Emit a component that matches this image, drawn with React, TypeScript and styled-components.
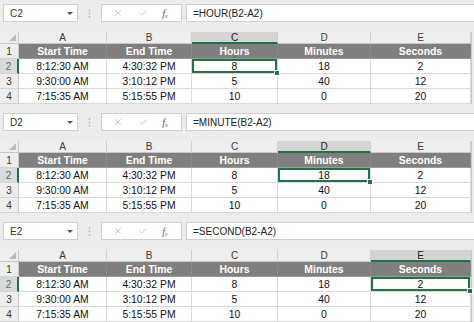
import React from 'react'
import styled, { createGlobalStyle } from 'styled-components'
import { X, Check } from 'lucide-react'

const GlobalStyle = createGlobalStyle`
    body {
        margin: 0;
        background: #ececec;
        font-family: "Liberation Sans", Arial, sans-serif;
    }
`

const Sheet = styled.div`
    width: 474px;
    display: flex;
    flex-direction: column;
`

const Panel = styled.div<{ $first?: boolean }>`
    display: flex;
    flex-direction: column;
    padding-top: ${p => (p.$first ? 4 : 9)}px;
    background: #ececec;
`

const FormulaBar = styled.div`
    display: flex;
    height: 18px;
    padding-left: 3px;
`

const NameBox = styled.div`
    width: 75px;
    box-sizing: border-box;
    background: #fff;
    border: 1px solid #cfcfcf;
    display: flex;
    align-items: center;
    justify-content: space-between;
    padding: 0 4px 0 6px;
    font-size: 10px;
    color: #333;
`

const Arrow = styled.span`
    width: 0;
    height: 0;
    border-left: 3px solid transparent;
    border-right: 3px solid transparent;
    border-top: 3px solid #555;
`

const Grip = styled.div`
    width: 23px;
    display: flex;
    align-items: center;
    justify-content: center;
`

const FuncBox = styled.div`
    width: 81px;
    box-sizing: border-box;
    background: #fff;
    border: 1px solid #cfcfcf;
    display: flex;
    align-items: center;
    justify-content: space-around;
    padding: 0 6px 0 4px;
    color: #b0b0b0;
`

const Fx = styled.span`
    font-family: "Liberation Serif", serif;
    font-style: italic;
    font-size: 10.5px;
    color: #666;
    sub {
        font-size: 6px;
        vertical-align: -1px;
    }
`

const FormulaInput = styled.div`
    flex: 1;
    margin-left: 4px;
    box-sizing: border-box;
    background: #fff;
    border: 1px solid #cfcfcf;
    border-right: none;
    display: flex;
    align-items: center;
    padding-left: 6px;
    font-size: 10px;
    color: #222;
`

const Grid = styled.div`
    margin-top: 10px;
    width: 471px;
    display: grid;
    grid-template-columns: 19px 88px 85px 86px 93px 100px;
    grid-auto-rows: 15px;
    grid-template-rows: 12px;
    border-right: 1px solid #c8c8c8;
    background: #fff;
`

const Corner = styled.div`
    background: #eeeeee;
    border-right: 1px solid #c8c8c8;
    border-bottom: 1px solid #c8c8c8;
    box-sizing: border-box;
    display: flex;
    align-items: flex-end;
    justify-content: flex-end;
    padding: 0 2px 2px 0;
`

const ColHead = styled.div<{ $active?: boolean }>`
    box-sizing: border-box;
    display: flex;
    align-items: center;
    justify-content: center;
    font-size: 10px;
    color: ${p => (p.$active ? '#1f1f1f' : '#3a3a3a')};
    background: ${p => (p.$active ? '#d4d4d4' : '#eeeeee')};
    border-right: 1px solid #d0d0d0;
    border-bottom: ${p => (p.$active ? '2px solid #217346' : '1px solid #c8c8c8')};
`

const RowHead = styled.div<{ $active?: boolean }>`
    box-sizing: border-box;
    display: flex;
    align-items: center;
    justify-content: center;
    font-size: 10px;
    color: ${p => (p.$active ? '#4f7a62' : '#3a3a3a')};
    background: ${p => (p.$active ? '#d9d9d9' : '#eeeeee')};
    border-right: ${p => (p.$active ? '2px solid #217346' : '1px solid #c8c8c8')};
    border-bottom: 1px solid #d4d4d4;
`

const TitleCell = styled.div`
    box-sizing: border-box;
    display: flex;
    align-items: center;
    justify-content: center;
    font-size: 10.4px;
    font-weight: bold;
    color: #fff;
    background: #7f7f7f;
    border-right: 1px solid #8a8a8a;
    border-bottom: 1px solid #9a9a9a;
`

const Cell = styled.div<{ $selected?: boolean }>`
    position: relative;
    box-sizing: border-box;
    display: flex;
    align-items: center;
    justify-content: center;
    font-size: 10.4px;
    color: #111;
    background: #fff;
    border-right: 1px solid #d9d9d9;
    border-bottom: 1px solid #d9d9d9;
    box-shadow: ${p => (p.$selected ? 'inset 0 0 0 2px #217346' : 'none')};

    &::after {
        content: '';
        display: ${p => (p.$selected ? 'block' : 'none')};
        position: absolute;
        right: -3px;
        bottom: -3px;
        width: 4px;
        height: 4px;
        background: #217346;
        border: 1px solid #fff;
        z-index: 2;
    }
`

const columns = ['A', 'B', 'C', 'D', 'E']
const titles = ['Start Time', 'End Time', 'Hours', 'Minutes', 'Seconds']
const rows = [
    ['8:12:30 AM', '4:30:32 PM', '8', '18', '2'],
    ['9:30:00 AM', '3:10:12 PM', '5', '40', '12'],
    ['7:15:35 AM', '5:15:55 PM', '10', '0', '20'],
]

const panels = [
    { name: 'C2', formula: '=HOUR(B2-A2)', col: 2 },
    { name: 'D2', formula: '=MINUTE(B2-A2)', col: 3 },
    { name: 'E2', formula: '=SECOND(B2-A2)', col: 4 },
]

const GripDots = () => (
    <svg width="3" height="9" viewBox="0 0 3 9">
        {[1, 4.5, 8].map(y => (
            <circle key={y} cx="1.5" cy={y} r="0.9" fill="#bbb" />
        ))}
    </svg>
)

const CornerMark = () => (
    <svg width="7" height="7" viewBox="0 0 7 7">
        <polygon points="7,0 7,7 0,7" fill="#bdbdbd" />
    </svg>
)

const SheetPanel = ({ name, formula, col, first }: { name: string, formula: string, col: number, first?: boolean }) => (
    <Panel $first={first}>
        <FormulaBar>
            <NameBox>
                {name}
                <Arrow />
            </NameBox>
            <Grip><GripDots /></Grip>
            <FuncBox>
                <X size={10} strokeWidth={1.6} />
                <Check size={10} strokeWidth={1.6} />
                <Fx>f<sub>x</sub></Fx>
            </FuncBox>
            <FormulaInput>{formula}</FormulaInput>
        </FormulaBar>
        <Grid>
            <Corner><CornerMark /></Corner>
            {columns.map((c, i) => (
                <ColHead key={c} $active={i === col}>{c}</ColHead>
            ))}
            <RowHead>1</RowHead>
            {titles.map(t => <TitleCell key={t}>{t}</TitleCell>)}
            {rows.map((r, ri) => (
                <React.Fragment key={ri}>
                    <RowHead $active={ri === 0}>{ri + 2}</RowHead>
                    {r.map((v, ci) => (
                        <Cell key={ci} $selected={ri === 0 && ci === col}>{v}</Cell>
                    ))}
                </React.Fragment>
            ))}
        </Grid>
    </Panel>
)

export default function App() {
    return (
        <Sheet>
            <GlobalStyle />
            {panels.map((p, i) => (
                <SheetPanel key={p.name} {...p} first={i === 0} />
            ))}
        </Sheet>
    )
}
